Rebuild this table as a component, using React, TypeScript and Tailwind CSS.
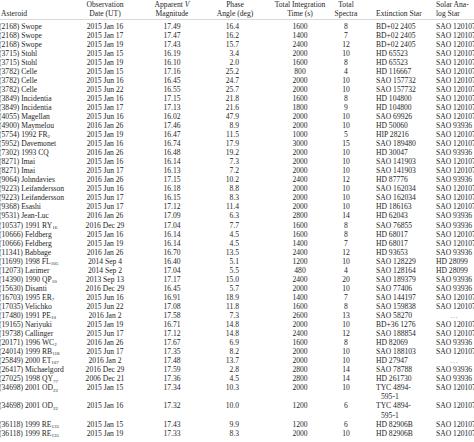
import type { ReactNode } from 'react';

interface ObsRow {
  id: string;
  name: string;
  sub?: string;
  date: string;
  mag: string;
  phase: string;
  time: string;
  spectra: string;
  ext: string;
  extWrap?: string;
  solar: string;
}

const rows: ObsRow[] = [
  { id: '2168', name: 'Swope', date: '2015 Jan 16', mag: '17.49', phase: '16.4', time: '1600', spectra: '8', ext: 'BD+02 2405', solar: 'SAO 120107' },
  { id: '2168', name: 'Swope', date: '2015 Jan 17', mag: '17.47', phase: '16.2', time: '1400', spectra: '7', ext: 'BD+02 2405', solar: 'SAO 120107' },
  { id: '2168', name: 'Swope', date: '2015 Jan 19', mag: '17.43', phase: '15.7', time: '2400', spectra: '12', ext: 'BD+02 2405', solar: 'SAO 120107' },
  { id: '3715', name: 'Stohl', date: '2015 Jan 15', mag: '16.19', phase: '3.4', time: '2000', spectra: '10', ext: 'HD 65523', solar: 'SAO 120107' },
  { id: '3715', name: 'Stohl', date: '2015 Jan 19', mag: '16.10', phase: '2.0', time: '1600', spectra: '8', ext: 'HD 65523', solar: 'SAO 120107' },
  { id: '3782', name: 'Celle', date: '2015 Jan 15', mag: '17.16', phase: '25.2', time: '800', spectra: '4', ext: 'HD 116667', solar: 'SAO 120107' },
  { id: '3782', name: 'Celle', date: '2015 Jun 16', mag: '16.45', phase: '24.7', time: '2000', spectra: '10', ext: 'SAO 157732', solar: 'SAO 120107' },
  { id: '3782', name: 'Celle', date: '2015 Jun 22', mag: '16.55', phase: '25.7', time: '2000', spectra: '10', ext: 'SAO 157732', solar: 'SAO 120107' },
  { id: '3849', name: 'Incidentia', date: '2015 Jan 16', mag: '17.15', phase: '21.8', time: '1600', spectra: '8', ext: 'HD 104800', solar: 'SAO 120107' },
  { id: '3849', name: 'Incidentia', date: '2015 Jan 17', mag: '17.13', phase: '21.6', time: '1800', spectra: '9', ext: 'HD 104800', solar: 'SAO 120107' },
  { id: '4055', name: 'Magellan', date: '2015 Jun 16', mag: '16.02', phase: '47.9', time: '2000', spectra: '10', ext: 'SAO 69926', solar: 'SAO 120107' },
  { id: '4900', name: 'Maymelou', date: '2016 Jan 26', mag: '17.46', phase: '8.9', time: '2000', spectra: '10', ext: 'HD 50060', solar: 'SAO 93936' },
  { id: '5754', name: '1992 FR', sub: '2', date: '2015 Jan 19', mag: '16.47', phase: '11.5', time: '1000', spectra: '5', ext: 'HIP 28216', solar: 'SAO 120107' },
  { id: '5952', name: 'Davemonet', date: '2015 Jan 16', mag: '16.74', phase: '17.9', time: '3000', spectra: '15', ext: 'SAO 189480', solar: 'SAO 120107' },
  { id: '7302', name: '1993 CQ', date: '2016 Jan 26', mag: '16.48', phase: '19.2', time: '2000', spectra: '10', ext: 'HD 30047', solar: 'SAO 93936' },
  { id: '8271', name: 'Imai', date: '2015 Jan 16', mag: '16.14', phase: '7.3', time: '2000', spectra: '10', ext: 'SAO 141903', solar: 'SAO 120107' },
  { id: '8271', name: 'Imai', date: '2015 Jun 17', mag: '16.13', phase: '7.2', time: '2000', spectra: '10', ext: 'SAO 141903', solar: 'SAO 120107' },
  { id: '9064', name: 'Johndavies', date: '2016 Jan 26', mag: '17.15', phase: '10.2', time: '2400', spectra: '12', ext: 'HD 87776', solar: 'SAO 93936' },
  { id: '9223', name: 'Leifandersson', date: '2015 Jun 16', mag: '16.18', phase: '8.8', time: '2000', spectra: '10', ext: 'SAO 162034', solar: 'SAO 120107' },
  { id: '9223', name: 'Leifandersson', date: '2015 Jun 17', mag: '16.15', phase: '8.3', time: '2000', spectra: '10', ext: 'SAO 162034', solar: 'SAO 120107' },
  { id: '9368', name: 'Esashi', date: '2015 Jun 17', mag: '17.12', phase: '11.4', time: '2000', spectra: '10', ext: 'HD 186163', solar: 'SAO 120107' },
  { id: '9531', name: 'Jean-Luc', date: '2016 Jan 26', mag: '17.09', phase: '6.3', time: '2800', spectra: '14', ext: 'HD 62043', solar: 'SAO 93936' },
  { id: '10537', name: '1991 RY', sub: '16', date: '2016 Dec 29', mag: '17.04', phase: '7.7', time: '1600', spectra: '8', ext: 'SAO 76855', solar: 'SAO 93936' },
  { id: '10666', name: 'Feldberg', date: '2015 Jan 16', mag: '16.14', phase: '4.5', time: '1600', spectra: '8', ext: 'HD 68017', solar: 'SAO 120107' },
  { id: '10666', name: 'Feldberg', date: '2015 Jan 19', mag: '16.14', phase: '4.5', time: '1400', spectra: '7', ext: 'HD 68017', solar: 'SAO 120107' },
  { id: '11341', name: 'Babbage', date: '2016 Jan 26', mag: '16.70', phase: '13.5', time: '2400', spectra: '12', ext: 'HD 93653', solar: 'SAO 93936' },
  { id: '11699', name: '1998 FL', sub: '105', date: '2014 Sep 4', mag: '16.40', phase: '5.1', time: '1200', spectra: '10', ext: 'SAO 128229', solar: 'HD 28099' },
  { id: '12073', name: 'Larimer', date: '2014 Sep 2', mag: '17.04', phase: '5.5', time: '480', spectra: '4', ext: 'SAO 128164', solar: 'HD 28099' },
  { id: '14390', name: '1990 QP', sub: '10', date: '2013 Sep 13', mag: '17.17', phase: '15.0', time: '2400', spectra: '20', ext: 'SAO 189379', solar: 'SAO 93936' },
  { id: '15630', name: 'Disanti', date: '2016 Dec 29', mag: '16.45', phase: '5.7', time: '2000', spectra: '10', ext: 'SAO 77406', solar: 'SAO 93936' },
  { id: '16703', name: '1995 ER', sub: '7', date: '2015 Jun 16', mag: '16.91', phase: '18.9', time: '1400', spectra: '7', ext: 'SAO 144197', solar: 'SAO 120107' },
  { id: '17035', name: 'Velichko', date: '2015 Jun 22', mag: '17.08', phase: '11.8', time: '1600', spectra: '8', ext: 'SAO 159838', solar: 'SAO 120107' },
  { id: '17480', name: '1991 PE', sub: '10', date: '2016 Jan 2', mag: '17.58', phase: '7.3', time: '2600', spectra: '13', ext: 'SAO 58270', solar: '...' },
  { id: '19165', name: 'Nariyuki', date: '2015 Jan 19', mag: '16.71', phase: '14.8', time: '2000', spectra: '10', ext: 'BD+36 1276', solar: 'SAO 120107' },
  { id: '19738', name: 'Callinger', date: '2015 Jun 17', mag: '17.12', phase: '14.8', time: '2400', spectra: '12', ext: 'SAO 188854', solar: 'SAO 120107' },
  { id: '20171', name: '1996 WC', sub: '2', date: '2016 Jan 26', mag: '17.67', phase: '6.9', time: '1600', spectra: '8', ext: 'HD 82069', solar: 'SAO 93936' },
  { id: '24014', name: '1999 RB', sub: '118', date: '2015 Jun 17', mag: '17.35', phase: '8.2', time: '2000', spectra: '10', ext: 'SAO 188103', solar: 'SAO 120107' },
  { id: '25849', name: '2000 ET', sub: '107', date: '2016 Jan 2', mag: '17.48', phase: '13.7', time: '2000', spectra: '10', ext: 'HD 27947', solar: '...' },
  { id: '26417', name: 'Michaelgord', date: '2016 Dec 29', mag: '17.59', phase: '2.8', time: '2800', spectra: '14', ext: 'SAO 78788', solar: 'SAO 93936' },
  { id: '27025', name: '1998 QY', sub: '77', date: '2006 Dec 21', mag: '17.36', phase: '4.5', time: '2800', spectra: '14', ext: 'HD 261730', solar: 'SAO 93936' },
  { id: '34698', name: '2001 OD', sub: '22', date: '2015 Jan 15', mag: '17.34', phase: '10.3', time: '2000', spectra: '10', ext: 'TYC 4894-', extWrap: '595-1', solar: 'SAO 120107' },
  { id: '34698', name: '2001 OD', sub: '22', date: '2015 Jan 16', mag: '17.32', phase: '10.0', time: '1200', spectra: '6', ext: 'TYC 4894-', extWrap: '595-1', solar: 'SAO 120107' },
  { id: '36118', name: '1999 RE', sub: '135', date: '2015 Jan 15', mag: '17.43', phase: '9.9', time: '1200', spectra: '6', ext: 'HD 82906B', solar: 'SAO 120107' },
  { id: '36118', name: '1999 RE', sub: '135', date: '2015 Jan 19', mag: '17.33', phase: '8.3', time: '2000', spectra: '10', ext: 'HD 82906B', solar: 'SAO 120107' },
];

// shared column template so header and body line up
const cols = 'grid grid-cols-[72px_66px_68px_54px_72px_28px_76px_1fr]';

function HeadCell({ top, bottom, className = '' }: { top?: ReactNode; bottom: ReactNode; className?: string }) {
  return (
    <div className={`flex flex-col whitespace-nowrap ${className}`}>
      <span>{top ?? '\u00a0'}</span>
      <span>{bottom}</span>
    </div>
  );
}

export default function App() {
  return (
    <div
      className="h-[442px] w-[474px] overflow-hidden bg-white text-[#262626]"
      style={{ fontFamily: '"Liberation Serif", "Times New Roman", serif' }}
    >
      {/* Header */}
      <div className={`${cols} text-[7.6px] leading-[9px]`}>
        <HeadCell bottom="Asteroid" className="pl-[1px]" />
        <HeadCell top="Observation" bottom="Date (UT)" className="items-center" />
        <HeadCell
          top={
            <>
              Apparent <i>V</i>
            </>
          }
          bottom="Magnitude"
          className="items-center"
        />
        <HeadCell top="Phase" bottom="Angle (deg)" className="items-center pl-[4px]" />
        <HeadCell top="Total Integration" bottom="Time (s)" className="items-center pl-[8px]" />
        <HeadCell top="Total" bottom="Spectra" className="items-center" />
        <HeadCell bottom="Extinction Star" className="pl-[16px]" />
        <HeadCell top="Solar Ana-" bottom="log Star" />
      </div>
      <div className="mt-[1px] h-px bg-[#dadada]" />

      {/* Body */}
      <div className="pt-[1.5px] text-[7.6px] leading-[9.05px]">
        {rows.map((r, i) => (
          <div key={i} className={`${cols} whitespace-nowrap`}>
            <div className="-ml-[1px]">
              ({r.id}) {r.name}
              {r.sub && <sub className="text-[5px] leading-none">{r.sub}</sub>}
            </div>
            <div className="text-center">{r.date}</div>
            <div className="text-center">{r.mag}</div>
            <div className="pr-[21px] text-right">{r.phase}</div>
            <div className="pl-[8px] text-center">{r.time}</div>
            <div className="text-center">{r.spectra}</div>
            <div className="pl-[16px]">
              {r.ext}
              {r.extWrap && <div className="pl-[5px]">{r.extWrap}</div>}
            </div>
            <div className={r.solar === '...' ? 'pr-[2px] text-center text-[#8a8a8a]' : ''}>
              {r.solar === '...' ? '\u2026' : r.solar}
            </div>
          </div>
        ))}
      </div>
    </div>
  );
}
